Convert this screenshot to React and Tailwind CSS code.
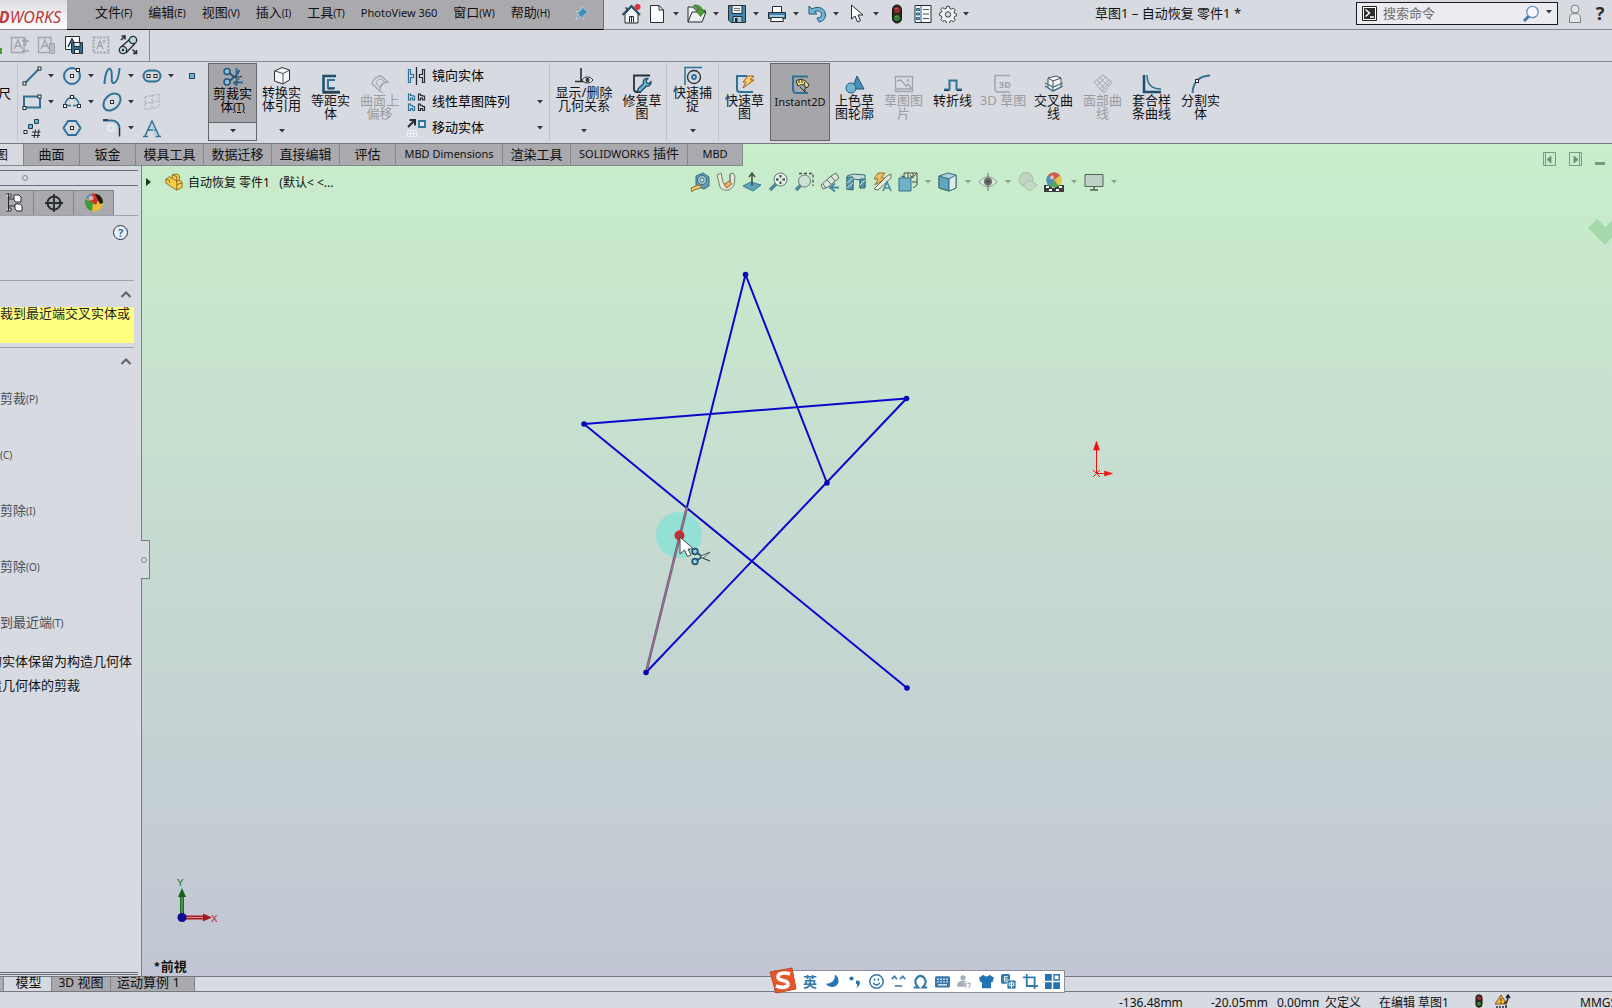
import React from 'react';

const B = '#2f7297';
const D = '#262c32';
const L = '#6fb4d3';
const G = '#a3a5aa';

const Svg = ({ size = 20, children, className = '' }) => (
  <svg width={size} height={size} viewBox="0 0 20 20" fill="none" className={`shrink-0 ${className}`} aria-hidden="true">
    {children}
  </svg>
);

const Caret = ({ color = '#33363b' }) => (
  <svg width="6" height="4" viewBox="0 0 6 4" className="shrink-0" aria-hidden="true">
    <path d="M0 0h6L3 3.6z" fill={color} />
  </svg>
);

// small square handle used on sketch entity icons
const Node = ({ x, y }) => <rect x={x - 1.5} y={y - 1.5} width="3" height="3" fill="#fff" stroke={D} />;

const ICONS = {
  // title bar
  home: (
    <Svg>
      <path d="M4 10v9h13v-9l-6.500-7z" fill="#f4f5f7" stroke={D} />
      <path d="M1.500 11 10.500 2 19 11" stroke="#24566f" strokeWidth="2.200" />
      <path d="M4 4h2v4" stroke={D} />
      <path d="M8.500 18.500v-6h4v6M10.500 12.500v6" stroke={D} />
      <circle cx="16.500" cy="3" r="3" fill="#e23440" />
    </Svg>
  ),
  doc: (
    <Svg>
      <path d="M3.500 1.500h8.500l4.500 4.500v12.500h-13z" fill="#fafbfc" stroke={D} strokeLinejoin="round" />
      <path d="M12 1.500v4.500h4.500" stroke={D} />
    </Svg>
  ),
  open: (
    <Svg>
      <path d="M1 18V3h5l1.500 2H15v3h4l-4 10z" fill="#edf0f1" stroke={D} />
      <path d="M1 18l4-10h14" stroke={D} />
      <path d="M7 1c5 0 8 2 8 5h3.500l-5 6.500-5-6.500h3.500c0-2-2-3-5-3z" fill="#4ca32c" stroke="#24601a" strokeWidth=".7" />
    </Svg>
  ),
  save: (
    <Svg>
      <path d="M1.500 1.500h17v17H4l-2.500-2.500z" fill="#4289af" stroke={D} />
      <path d="M5 1.500h10v8H5z" fill="#f0f3f5" stroke={D} />
      <path d="M7 4.500h6M7 6.500h6" stroke="#777" />
      <path d="M6 12.500h9v6H6z" fill="#a8cbdc" stroke={D} />
      <path d="M8 14h2.500v4H8z" fill={D} />
    </Svg>
  ),
  print: (
    <Svg>
      <path d="M5.500 8V2.500h9V8" fill="#fff" stroke={D} />
      <path d="M1.500 8.500h17v6h-17z" fill="#3f83aa" stroke={D} />
      <path d="M3 12h14" stroke="#bfe0ef" strokeWidth="1.500" />
      <path d="M4.500 13.500h11l1 4h-13z" fill="#fff" stroke={D} />
    </Svg>
  ),
  undo: (
    <Svg>
      <path d="M2 2v8h8L7.500 7.500c4-1.500 7 .5 7 3 0 2-1.500 3.500-4.500 3.500l2 4c4-.5 6.500-3.500 6.500-7C18.500 5 12 1 5 5z" fill={L} stroke="#1f5879" strokeLinejoin="round" />
    </Svg>
  ),
  cursor: (
    <Svg>
      <path d="M4.500 1v14l3.500-3 2.500 6 3-1.300-2.500-5.700H16z" fill="#fff" stroke={D} strokeLinejoin="round" />
    </Svg>
  ),
  traffic: (
    <Svg>
      <rect x="5.500" y="1" width="9" height="18" rx="4.500" fill="#2c2520" stroke="#181411" />
      <circle cx="10" cy="6" r="3" fill="#9e2b25" />
      <circle cx="10" cy="14" r="3" fill="#2f8432" />
      <path d="M8.500 5l1-1M8.500 13l1-1" stroke="#eba99b" />
    </Svg>
  ),
  list: (
    <Svg>
      <path d="M2 1.500h16v17H2z" fill="#f6f8f9" stroke={D} />
      <path d="M8 2v16M3.500 4.500h3v2h-3zM3.500 9h3v2h-3zM3.500 13.500h3v2h-3z" fill={L} stroke="#275f80" />
      <path d="M10 5.500h6M10 10h6M10 14.500h6" stroke="#555" />
    </Svg>
  ),
  gear: (
    <Svg size={18}>
      <path
        d="M8.500 1.500h3l.6 2.500 1.700.7 2.200-1.300 2 2-1.300 2.200.7 1.700 2.100.7v2l-2.100.7-.7 1.700 1.300 2.200-2 2-2.200-1.300-1.700.7-.6 2.500h-3l-.6-2.500-1.700-.7L4 18.100l-2-2 1.300-2.200-.7-1.700L.5 11.500v-2.500l2.100-.7.7-1.700L2 4.900l2-2 2.200 1.300L7.900 4z"
        fill="#eff1f3"
        stroke="#3b4046"
        strokeWidth="1.100"
      />
      <circle cx="10" cy="10.500" r="3" fill="#d7dae0" stroke="#3b4046" strokeWidth="1.100" />
    </Svg>
  ),
  pin: (
    <Svg size={16}>
      <path d="M10 2l8 8-3 .5-3 3 .5 4L8 14l-6 4.500L6.500 12 2 8l4.500.5 3-3z" fill="#3f8cbb" stroke="#d7ebf5" strokeWidth=".8" />
    </Svg>
  ),
  // annotation toolbar
  noteAdd: (
    <Svg>
      <path d="M1.500 2.500H14v15H1.500zM4 14l4-9 4 9M5.500 11h5M12 6h7M15.500 3v8M12 16h7" stroke={G} strokeWidth="1.400" />
    </Svg>
  ),
  noteDel: (
    <Svg>
      <path d="M1.500 2.500H14v15H1.500zM4 14l4-9 4 9M5.500 11h5" stroke={G} strokeWidth="1.400" />
      <path d="M12.500 8.500h5v10h-5z" fill="#b9bbc0" stroke={G} />
    </Svg>
  ),
  noteSave: (
    <Svg>
      <path d="M1.500 1.500h14v13h-14z" fill="#f7f8f9" stroke={D} />
      <path d="M4 12l4-8 3 6" stroke={D} strokeWidth="1.500" />
      <path d="M7.500 7.500h11v11h-10l-1-1z" fill="#2f6f95" stroke={D} />
      <path d="M10 7.500h6v4h-6zM10.500 14.500h5v4h-5z" fill="#dfe9ee" stroke={D} />
    </Svg>
  ),
  noteSel: (
    <Svg>
      <rect x="2.500" y="2.500" width="15" height="15" stroke={G} strokeWidth="2" strokeDasharray="2 1.300" />
      <path d="M6 14l3-8 3 8M7 11h4" stroke={G} strokeWidth="1.400" />
      <circle cx="13" cy="6.500" r="1.300" stroke={G} />
    </Svg>
  ),
  link: (
    <Svg>
      <path d="M2.500 12.500l9-8M8 18l9-9.500" stroke={D} strokeWidth="1.300" />
      <circle cx="5" cy="15" r="3.700" fill="#b7d6e4" stroke={D} strokeWidth="1.300" />
      <circle cx="15" cy="5" r="3.700" fill="#b7d6e4" stroke={D} strokeWidth="1.300" />
      <circle cx="5" cy="15" r="1.200" fill={D} />
      <path d="M3 5l4-4M3.500 1H7v3.500M14.500 14.500l4 4M18.500 15v3.500H15" stroke={D} strokeWidth="1.500" />
    </Svg>
  ),
  // sketch entities
  line: (<Svg><path d="M2 18L18 2" stroke={B} strokeWidth="2" /><Node x={2.5} y={17.5} /><Node x={17.5} y={2.5} /></Svg>),
  rect: (<Svg><path d="M2 4.500h16v11H2z" stroke={B} strokeWidth="2" /><Node x={2.5} y={16} /><Node x={17.5} y={4.5} /></Svg>),
  pattern: (
    <Svg>
      <Node x={3.5} y={14} />
      <path d="M6.500 6.500h4v4h-4zM12.500 1.500h4v4h-4z" fill={L} stroke="#1d4157" />
      <path d="M10 14h8.500M9.500 17.500H18M13.500 11.500L12 20M17 11.500L15.500 20" stroke={D} strokeWidth="1.100" />
    </Svg>
  ),
  circle: (<Svg><circle cx="10" cy="10" r="8" stroke={B} strokeWidth="2" /><Node x={10} y={10} /><Node x={16} y={4} /></Svg>),
  arc: (<Svg><path d="M3 14C3 2.500 17 2.500 17 14" stroke={B} strokeWidth="1.600" /><path d="M5 13.500h4M11 13.500h4" stroke={B} strokeWidth="1.300" /><Node x={3} y={14} /><Node x={17} y={14} /><Node x={10} y={5} /></Svg>),
  polygon: (<Svg><path d="M6 3h8l4.500 7L14 17H6l-4.500-7z" stroke={B} strokeWidth="2" strokeLinejoin="round" /><Node x={10} y={10} /></Svg>),
  spline: (<Svg><path d="M2.500 18C3 6 7 0 9 4s-1 14 3 13S17 9 17.500 2" stroke={B} strokeWidth="2" /></Svg>),
  ellipse: (<Svg><ellipse cx="10" cy="10" rx="9.800" ry="7" transform="rotate(-45 10 10)" stroke={B} strokeWidth="2" /><Node x={10} y={10} /></Svg>),
  fillet: (<Svg><path d="M1 2.500h9c5 0 7.500 4 7.500 8" stroke={B} strokeWidth="2" /><path d="M17.500 10v8.500M1 2h5" stroke={D} strokeWidth="1.500" /><circle cx="9" cy="10" r="3" stroke="#eceef1" strokeWidth="1.500" /></Svg>),
  slot: (<Svg><rect x="1.500" y="4.500" width="17" height="11" rx="5.500" stroke={B} strokeWidth="2" /><Node x={6.5} y={10} /><Node x={13.5} y={10} /></Svg>),
  plane: (<Svg><path d="M3 5l14-3v13L3 18zM10 3v14M3 11.500l14-3" stroke={G} strokeDasharray="2 1.500" /></Svg>),
  text: (<Svg><path d="M3 18l7-15 7 15M6 12h8M1 18.500h5M13.500 18.500H19" stroke={B} strokeWidth="1.500" /><path d="M9 6l5.500 12" stroke="#9cc9de" strokeWidth="1.500" /></Svg>),
  point: (<Svg><path d="M7.500 7.500h5v5h-5z" fill={L} stroke="#1d4157" /></Svg>),
  // ribbon
  trim: (
    <Svg>
      <circle cx="4" cy="4.500" r="3" fill="#8fc2da" stroke="#1f5879" strokeWidth="1.500" />
      <circle cx="4" cy="15" r="3" fill="#8fc2da" stroke="#1f5879" strokeWidth="1.500" />
      <path d="M6.500 6l5 4.500M6.500 14l7-6 3-5" stroke="#1f5879" strokeWidth="1.800" />
      <path d="M13.500 1v18M10 15.500h10" stroke="#2c6c92" strokeWidth="1.800" />
      <path d="M11.500 10.500l7.500-1M11.500 18l7-10" stroke={D} strokeDasharray="2 1" />
    </Svg>
  ),
  convert: (
    <Svg>
      <path d="M2.500 5l7.500-3.500L17.500 4v10L11 18l-8.500-3z" fill="#f4f6f7" stroke={D} strokeLinejoin="round" />
      <path d="M3 5l8 2.500V17.500M11 7.500L17 4.500" stroke="#4a5258" />
    </Svg>
  ),
  offset: (
    <Svg>
      <path d="M15 2H2.500v16H19" stroke="#1d4f6f" strokeWidth="2.500" />
      <path d="M14 6H7v8h7" stroke={B} strokeWidth="2" />
      <path d="M7 15h6M2 19h17" stroke={D} />
    </Svg>
  ),
  surfOffset: (
    <Svg>
      <path d="M2 10c1-6 6-8 9-8l7 6c-5 0-8 4-8 9z" stroke={G} strokeWidth="1.300" />
      <path d="M6 9c1-3 3-4 5-4l4 3c-3 1-5 3-5 6zM10 17l3 2" stroke={G} />
    </Svg>
  ),
  mirror: (
    <Svg>
      <path d="M10.500 1v18" stroke={D} strokeWidth="1.300" />
      <path d="M2.500 3.500v13h2v-5h3v-3h-3v-5z" stroke={B} strokeWidth="1.200" />
      <path d="M18.500 3.500v13h-2v-5h-3v-3h3v-5z" stroke={D} strokeWidth="1.200" />
    </Svg>
  ),
  array: (
    <Svg>
      <path d="M2.500 2v6h2V6h2v2h2V4h-2v-.5h-2V2zM2.500 12v6.500h2v-2h2v2h2v-4h-2v-1h-2V12z" stroke={B} strokeWidth="1.200" />
      <path d="M12.500 2v6h2V6h2v2h2V4h-2v-.5h-2V2zM12.500 12v6.500h2v-2h2v2h2v-4h-2v-1h-2V12z" stroke={D} strokeWidth="1.200" />
    </Svg>
  ),
  move: (
    <Svg>
      <path d="M2 9l6-6M3.500 2H9v5.500" stroke={D} strokeWidth="2" />
      <path d="M13 3h6v6h-6z" fill="#e7edf0" stroke={B} strokeWidth="1.800" />
      <path d="M1.500 12.500h9v6h-9zM4.500 12v7M7.500 12v7M1 15.500h10" stroke="#f0f1f3" />
    </Svg>
  ),
  relations: (
    <Svg>
      <path d="M7 2v13M1 15.500h10" stroke={D} strokeWidth="1.600" />
      <path d="M8 14c3-4 8-4 11 0-3 4-8 4-11 0z" fill="#f3f5f6" stroke={D} />
      <circle cx="13.500" cy="14" r="2.200" fill="#35404a" />
    </Svg>
  ),
  repair: (
    <Svg>
      <path d="M18 1.500H2V15c0 2 1 3 3 3h4" stroke="#24323c" strokeWidth="1.800" />
      <path d="M6 15l5.500-5.500c-1-3 1-5.500 4.500-5L14 7l1 2 2 .500 2-2c.5 3.500-2 5-4.500 4.500L9 17.500c-2 1.500-4.500-.5-3-2.500z" fill={L} stroke="#174967" strokeWidth="1.200" />
    </Svg>
  ),
  snap: (
    <Svg>
      <path d="M19 1.500H2V19" stroke={B} strokeWidth="1.500" />
      <circle cx="11" cy="11" r="6.500" stroke={D} strokeWidth="1.300" />
      <circle cx="11" cy="11" r="2" stroke={B} strokeWidth="1.800" />
    </Svg>
  ),
  rapid: (
    <Svg>
      <path d="M12 2H2v13c0 2 1 3 3 3h13" stroke={B} strokeWidth="2" />
      <path d="M13 2h6l-4 4h4L8 14l3-6H8z" fill="#ffd36b" stroke="#a5571b" />
    </Svg>
  ),
  instant: (
    <Svg>
      <path d="M18 1.500H3V14c0 2 1 4 3 4h12" stroke={B} strokeWidth="2" />
      <path d="M6 6c4-3 9-2 13 4l-2 3c-3-4-5-4-9-2z" fill="#f0d980" stroke={D} />
      <path d="M9 5v3M12 5v3M15 7l-1 3M10 12l5 5v-5" stroke={D} />
    </Svg>
  ),
  shaded: (
    <Svg>
      <path d="M12 2l7 13H7z" fill="#4791b7" stroke="#1f5879" />
      <circle cx="6" cy="14" r="5" fill="#74b6d4" stroke="#1f5879" />
    </Svg>
  ),
  picture: (
    <Svg>
      <path d="M1.500 2.500h17v15h-17zM3 7l4-1 5 6 2-2 4 5M2 15h16" stroke={G} strokeWidth="1.300" />
      <circle cx="14" cy="6.500" r="1" stroke={G} />
    </Svg>
  ),
  jog: (<Svg><path d="M1 15.500h5.500v-9h7v9H19" stroke={B} strokeWidth="2" /><path d="M1 16.500h5M14 16.500h5" stroke={D} /></Svg>),
  sketch3d: (
    <Svg>
      <path d="M17 1.500H2V15c0 2 1 3 3 3h12" stroke={G} strokeWidth="1.500" />
      <text x="6" y="14" fontSize="9" fontWeight="700" fontFamily="Noto Sans, sans-serif" fill={G}>3D</text>
    </Svg>
  ),
  intersect: (
    <Svg>
      <path d="M4 4l8-2 5 2v9l-8 4-5-3z" fill="#f4f5f6" stroke="#454c52" />
      <path d="M4 4l5 3 8-3M9 7v10" stroke="#454c52" />
      <path d="M1 9l8 4 10-4M1 12l8 5 10-5" stroke="#3f6f88" strokeWidth="1.200" />
    </Svg>
  ),
  face: (
    <Svg>
      <path d="M1 8l9-7 9 7-8 11zM4 6l8 9M7 4l8 8M4 11l9-8M7 15l9-9M9 17l8-9" stroke={G} />
    </Svg>
  ),
  fit: (<Svg><path d="M2 1v17h17" stroke="#1d4f6f" strokeWidth="2.500" /><path d="M5 1c0 9 4 14 14 14" stroke={B} strokeWidth="1.500" /></Svg>),
  split: (<Svg><path d="M1.500 19C2 8 8 2 19 1.500" stroke={B} strokeWidth="1.800" /><Node x={6} y={7} /></Svg>),
  // heads-up view toolbar
  tape: (
    <Svg>
      <path d="M6 4l7-3 6 4v9l-5 3-8-3z" fill="#4b92b5" stroke="#28546b" />
      <circle cx="12" cy="8" r="4.500" fill="#9ac8da" stroke="#28546b" />
      <circle cx="12" cy="8" r="2" fill="#e0eee9" stroke="#28546b" />
      <path d="M1 16l7-3 4 1-2 2-6 2-2 2z" fill="#f5c35c" stroke="#7c5a1a" />
    </Svg>
  ),
  clip: (
    <Svg>
      <path d="M1 3l4-2 2 9c2 4 5 4 7 0V2l3-1 2 3-1 9c-3 6-10 7-14 2z" fill="#e8e8dc" stroke="#6c6a58" />
      <path d="M14 2v8c-2 3-5 3-6 1" stroke="#6c6a58" />
      <path d="M8 13l5-4 3 3-5 4z" fill="#eda84d" stroke="#8a5720" />
    </Svg>
  ),
  normal: (
    <Svg>
      <path d="M1 14l8-4 10 3-8 6z" fill="#4c9abb" stroke="#24607c" />
      <path d="M10 14V2M7 5l3-4 3 4" stroke="#333" strokeWidth="1.500" />
    </Svg>
  ),
  zoomFit: (
    <Svg>
      <path d="M2 18l6-6" stroke="#39799a" strokeWidth="3.500" />
      <circle cx="12.500" cy="7.500" r="6.500" fill="#e2efe8" stroke="#596b68" />
      <path d="M12.500 3v2.500M12.500 9.500V12M8 7.500h2.500M14.500 7.500H17" stroke="#222" strokeWidth="1.800" />
    </Svg>
  ),
  zoomArea: (
    <Svg>
      <path d="M5 1.500h14V14" stroke="#333" strokeDasharray="3 2" strokeWidth="1.300" />
      <path d="M2 18l5-5" stroke="#39799a" strokeWidth="3.500" />
      <circle cx="10.500" cy="9" r="6" fill="#cfdfd6" stroke="#596b68" />
    </Svg>
  ),
  prevView: (
    <Svg>
      <path d="M1 13l10-9 5-3 3 5-11 9-5 2z" fill="#dee5df" stroke="#4f5c58" />
      <path d="M11 4l4 5M7 8l4 4M3 12l3 4" stroke="#4f5c58" />
      <path d="M19 15.500h-8m4-4l-5 4 5 4" stroke="#2f7ba1" strokeWidth="2" />
    </Svg>
  ),
  section: (
    <Svg>
      <path d="M1 4l6-2 12 1v12l-5 1V8L7 7v11l-6-1z" fill="#c6d9dc" stroke="#24556d" />
      <path d="M1 5h6v12.500H1zM14 7h5v9h-5z" fill="#3f88ac" stroke="#24556d" />
      <path d="M1 11l6-5M1 16l6-5M14 13l5-5" stroke="#d9edf3" />
    </Svg>
  ),
  dynView: (
    <Svg>
      <path d="M6 1h7L9 6h5L3 13l3-6H2z" fill="#f6b64c" stroke="#8c5b20" />
      <path d="M2 17L15 4l4-2v4L6 18z" fill="#ece9dc" stroke="#5d5b50" />
      <path d="M11 19l4-9 4 9M12.500 16h5" stroke="#2f7ba1" strokeWidth="1.600" />
    </Svg>
  ),
  orient: (
    <Svg>
      <path d="M6 6V1h13v12l-4 3M10 1v5M15 1v5M14 10h5M14 6l5-5" stroke="#333" />
      <path d="M1 6h12v13H1z" fill="#61a9c8" stroke="#1f5b79" />
      <path d="M3 4l4 1M12 5h2l-2-2" stroke="#333" />
    </Svg>
  ),
  cube: (
    <Svg>
      <path d="M1 4l9-3 8 2v13l-7 3-10-3z" fill="#a7cddd" stroke="#24556d" />
      <path d="M1 4l10 3v12L1 16z" fill="#4f9abc" stroke="#24556d" />
      <path d="M11 7l7-4v13l-7 3z" fill="#e0eef1" stroke="#24556d" />
    </Svg>
  ),
  eye: (
    <Svg>
      <path d="M1 10c5-7 13-7 18 0-5 6-13 6-18 0z" fill="#dfe5e1" stroke="#8b938e" />
      <circle cx="10" cy="9.500" r="4" fill="#525a58" />
      <circle cx="10" cy="9.500" r="1.500" fill="#111" />
      <path d="M10 1v18" stroke="#555" />
    </Svg>
  ),
  appearance: (
    <Svg>
      <circle cx="8" cy="7.500" r="7" fill="#bdd1be" stroke="#a3b7a5" />
      <path d="M5 13l6-5 8 5-7 6z" fill="#c5d7c6" stroke="#a3b7a5" />
    </Svg>
  ),
  scene: (
    <Svg>
      <path d="M0 13h20v7H0z" fill="#222" />
      <path d="M2 14h3v2H2zM8 14h3v2H8zM15 14h3v2h-3zM5 17h3v2H5zM12 17h3v2h-3z" fill="#fff" />
      <circle cx="10" cy="8" r="7.500" fill="#3f9a4b" />
      <path d="M10 8L4 3.500A7.500 7.500 0 0 1 16 3.500z" fill="#d4433b" />
      <path d="M10 8l6-4.500A7.500 7.500 0 0 1 15 14z" fill="#e8bc3c" />
      <path d="M10 8L4 3.500A7.500 7.500 0 0 0 5 14z" fill="#3b7fc0" />
      <circle cx="8" cy="5.500" r="2" fill="#fff" opacity=".6" />
    </Svg>
  ),
  monitor: (
    <Svg>
      <path d="M1 2.500h18v12H1z" fill="#bfcdc4" stroke="#414d48" />
      <path d="M10 15v3M6 18h8" stroke="#414d48" strokeWidth="1.500" />
    </Svg>
  ),
  part: (
    <Svg size={18}>
      <path d="M1 7l4-3 3 2V2l5-1 3 2v5l3 2v6l-6 3-8-5-4-3z" fill="#f8cf4b" stroke="#8a6516" />
      <path d="M8 6l5 3 3-1M13 9v4l6-2M13 13v6M8 2l5 2v5M5 11V8L1 7" stroke="#8a6516" />
    </Svg>
  ),
  // property manager tabs
  config: (
    <Svg>
      <path d="M4.500 1v17M2 1h5v3H4M2 18h5v-3H4" fill="#e9eaec" stroke={D} />
      <path d="M5 6h5M5 13h6" stroke={D} />
      <path d="M10 2h5l2 2v5h-5l-2-2zM11 11h5l2 2v5h-5l-2-2z" fill="#fff" stroke={D} />
    </Svg>
  ),
  target: (<Svg><circle cx="10" cy="10" r="6.500" stroke={D} strokeWidth="2" /><path d="M10 1v18M1 10h18" stroke={D} strokeWidth="1.800" /></Svg>),
  ball: (
    <Svg>
      <circle cx="10" cy="9.500" r="9" fill="#e9bd35" />
      <path d="M9 9.500L2 5A9 9 0 0 1 9 .5z" fill="#3c84c4" />
      <path d="M5 8L8 .7c3-.6 6 .3 8 2.300L12 12z" fill="#cf3527" />
      <path d="M11 1c5 0 8 4 8 9l-3 1z" fill="#1d1715" />
      <path d="M9 10L1.500 6A9 9 0 0 0 8 18z" fill="#3a9a44" />
      <circle cx="7" cy="5" r="2.500" fill="#fff" opacity=".55" />
    </Svg>
  ),
};

const QUICK = [
  { id: 'home', label: '主页' },
  { id: 'doc', label: '新建', menu: true },
  { id: 'open', label: '打开', menu: true },
  { id: 'save', label: '保存', menu: true },
  { id: 'print', label: '打印', menu: true },
  { id: 'undo', label: '撤消', menu: true },
  { id: 'cursor', label: '选择', menu: true },
  { id: 'traffic', label: '重建模型' },
  { id: 'list', label: '文件属性' },
  { id: 'gear', label: '选项', menu: true },
];

const MENUS = [
  ['文件', '(F)'], ['编辑', '(E)'], ['视图', '(V)'], ['插入', '(I)'], ['工具', '(T)'],
  ['', 'PhotoView 360'], ['窗口', '(W)'], ['帮助', '(H)'],
];

const ENTITIES = [
  ['line', true], ['circle', true], ['spline', true], ['slot', true], ['point', false],
  ['rect', true], ['arc', true], ['ellipse', true], ['plane', false], null,
  ['pattern', false], ['polygon', false], ['fillet', true], ['text', false], null,
];

const TABS = [
  ['', '曲面', 'w-14'],
  ['', '钣金', 'w-14'],
  ['', '模具工具', 'w-[68px]'],
  ['', '数据迁移', 'w-[68px]'],
  ['', '直接编辑', 'w-[68px]'],
  ['', '评估', 'w-14'],
  ['MBD Dimensions', '', 'w-[107px]'],
  ['', '渲染工具', 'w-[68px]'],
  ['SOLIDWORKS', ' 插件', 'w-[117px]'],
  ['MBD', '', 'w-14'],
];

const VIEW_TOOLS = [
  ['tape'], ['clip'], ['normal'], ['zoomFit'], ['zoomArea'], ['prevView'], ['section'], ['dynView'],
  ['orient', true], ['cube', true], ['eye', true], ['appearance'], ['scene', true], ['monitor', true],
];

const RibbonButton = ({ icon, lines, menu, disabled, width = 'w-[49px]', active }) => (
  <button
    type="button"
    disabled={disabled}
    className={`${width} flex h-[78px] shrink-0 flex-col items-center text-[13px] leading-[13px] whitespace-nowrap ${menu ? 'pt-[3px]' : 'pt-[11px]'} ${disabled ? 'text-[#9a9ca1]' : 'text-[#101216]'} ${active ? 'border border-[#65666b] bg-[#a6a5aa]' : ''}`}
  >
    {ICONS[icon]}
    {lines.map((l) => (
      <span key={l} className={l === 'Instant2D' ? 'text-[11px]' : ''}>{l}</span>
    ))}
    {menu && <span className="mt-auto pb-2"><Caret /></span>}
  </button>
);

const Divider = () => <div className="h-[78px] w-px shrink-0 bg-[#c0c3c9]" />;

const TitleBar = () => (
  <header className="flex h-[30px] shrink-0 items-stretch border-b border-[#85888d]">
    <div className="flex w-[67px] shrink-0 items-center justify-end overflow-hidden bg-gradient-to-b from-[#dcdde0] to-white pt-1 pr-1.5 text-[16px] text-[#b93c3f] italic">
      <b>SOLID</b>WORKS
    </div>
    <nav className="-mb-px flex w-[537px] shrink-0 items-center gap-4 border-r border-b border-r-[#707176] border-b-black bg-[#a9a9ae] pb-1 pl-7 text-[13px] whitespace-nowrap text-[#111]">
      {MENUS.map(([name, key]) => (
        <button key={name + key} type="button">
          {name}<span className={name ? 'text-[10px]' : 'text-[11px]'}>{key}</span>
        </button>
      ))}
      <button type="button" aria-label="固定菜单" className="ml-2">{ICONS.pin}</button>
    </nav>
    <div className="flex items-center pb-0.5 pl-[15px]">
      {QUICK.map(({ id, label, menu }) => (
        <button key={id} type="button" aria-label={label} className={`flex items-center pl-0.5 ${menu ? 'w-10 gap-1.5' : 'w-[26px]'}`}>
          {ICONS[id]}
          {menu && <Caret />}
        </button>
      ))}
    </div>
    <h1 className="ml-[118px] flex items-center pb-0.5 text-[13px] whitespace-nowrap text-[#111]">草图1 – 自动恢复 零件1 *</h1>
    <div className="ml-auto flex shrink-0 items-center gap-2.5 pr-1 pb-0.5">
      <label className="flex h-[23px] w-[202px] items-center border border-[#1a1b1e] bg-[#ececf0] px-[5px]">
        <svg width="15" height="15" viewBox="0 0 15 15" aria-hidden="true">
          <path d="M.5.5h14v14H.5z" fill="#fff" stroke="#222" />
          <path d="M2 2h11v11H2z" fill="#2d2d30" />
          <path d="M3.500 3.500l4 3.500-4 3.500M8 11h4" fill="none" stroke="#fff" strokeWidth="1.500" />
        </svg>
        <input type="text" aria-label="搜索命令" placeholder="搜索命令" className="ml-1.5 min-w-0 flex-1 bg-transparent text-[13px] outline-none placeholder:text-[#6c6d72]" />
        <svg width="18" height="18" viewBox="0 0 18 18" fill="none" aria-hidden="true">
          <path d="M2 16l5-5" stroke="#3c77a8" strokeWidth="3" />
          <circle cx="10.500" cy="7" r="5.700" fill="#f4f8fc" stroke="#6891b8" strokeWidth="1.300" />
        </svg>
        <span className="ml-1.5 pb-1"><Caret /></span>
      </label>
      <button type="button" aria-label="登录">
        <svg width="14" height="20" viewBox="0 0 14 20" fill="#e4e5e8" stroke="#7d7f84" aria-hidden="true">
          <circle cx="7" cy="5" r="4" />
          <path d="M1.500 18.500v-5c0-3 2-4 5.500-4s5.500 1 5.500 4v5z" />
        </svg>
      </button>
      <button type="button" className="w-4 text-[18px] font-bold text-[#2b2d31]">?</button>
    </div>
  </header>
);

const AnnotationBar = () => (
  <div className="flex h-8 shrink-0 border-b border-[#85888d]">
    <div className="flex w-[150px] items-center border-r border-[#85888d] pb-0.5">
      <div className="mt-3 mr-2 h-1.5 w-0.5 bg-[#4a9a2c]" />
      {['noteAdd', 'noteDel', 'noteSave', 'noteSel', 'link'].map((id) => (
        <button key={id} type="button" aria-label={id} className="w-[27px] shrink-0">{ICONS[id]}</button>
      ))}
    </div>
  </div>
);

const Ribbon = () => (
  <div className="flex h-[82px] shrink-0 items-start overflow-hidden border-b border-[#75787d] pt-px">
    <div className="flex h-[78px] w-[17px] shrink-0 items-center pb-4 text-[13px] whitespace-nowrap">
      <span className="-ml-0.5">尺</span>
    </div>
    <Divider />
    <div className="grid w-[190px] shrink-0 grid-cols-[40px_40px_40px_40px_30px] grid-rows-3 pl-1">
      {ENTITIES.map((e, i) =>
        e ? (
          <button key={e[0]} type="button" aria-label={e[0]} className="flex h-[26px] items-center gap-1.5">
            {ICONS[e[0]]}
            {e[1] && <Caret />}
          </button>
        ) : (
          <span key={i} />
        )
      )}
    </div>
    <div className="flex h-[78px] w-[49px] shrink-0 flex-col border border-[#65666b]">
      <button type="button" className="flex h-[58px] flex-col items-center bg-[#a6a5aa] pt-[3px] text-[13px] leading-[13px]">
        {ICONS.trim}
        <span>剪裁实</span>
        <span>体<span className="text-[10px] underline">(T)</span></span>
      </button>
      <button type="button" aria-label="剪裁选项" className="flex flex-1 items-center justify-center border-t border-[#65666b] pb-0.5"><Caret /></button>
    </div>
    <RibbonButton icon="convert" lines={['转换实', '体引用']} menu />
    <RibbonButton icon="offset" lines={['等距实', '体']} />
    <RibbonButton icon="surfOffset" lines={['曲面上', '偏移']} disabled />
    <div className="w-[145px] shrink-0 pr-1.5 pl-0.5 text-[13px]">
      {[['mirror', '镜向实体'], ['array', '线性草图阵列', true], ['move', '移动实体', true]].map(([id, name, menu]) => (
        <button key={id} type="button" className="flex h-[26px] w-full items-center gap-1.5">
          {ICONS[id]}
          <span className="flex-1 text-left">{name}</span>
          {menu && <Caret />}
        </button>
      ))}
    </div>
    <Divider />
    <RibbonButton icon="relations" lines={['显示/删除', '几何关系']} menu width="w-[68px]" />
    <RibbonButton icon="repair" lines={['修复草', '图']} width="w-12" />
    <Divider />
    <RibbonButton icon="snap" lines={['快速捕', '捉']} menu width="w-[51px]" />
    <Divider />
    <RibbonButton icon="rapid" lines={['快速草', '图']} width="w-[51px]" />
    <RibbonButton icon="instant" lines={['Instant2D']} width="w-[60px]" active />
    <RibbonButton icon="shaded" lines={['上色草', '图轮廓']} />
    <RibbonButton icon="picture" lines={['草图图', '片']} disabled />
    <RibbonButton icon="jog" lines={['转折线']} />
    <RibbonButton icon="sketch3d" lines={['3D 草图']} disabled width="w-[52px]" />
    <RibbonButton icon="intersect" lines={['交叉曲', '线']} />
    <RibbonButton icon="face" lines={['面部曲', '线']} disabled />
    <RibbonButton icon="fit" lines={['套合样', '条曲线']} />
    <RibbonButton icon="split" lines={['分割实', '体']} />
  </div>
);

const CommandTabs = () => (
  <div className="flex h-[22px] shrink-0 items-stretch">
    <div className="flex border-b border-[#85888d] text-[13px] leading-[18px] whitespace-nowrap text-[#111]">
      <button type="button" className="w-[23px] overflow-hidden bg-[#d7dae0] pb-0.5 text-left"><span className="-ml-[5px]">图</span></button>
      {TABS.map(([latin, cjk, width]) => (
        <button key={latin + cjk} type="button" className={`${width} border-l border-[#85868b] bg-[#a9a9ae] pb-0.5 last:border-r`}>
          {latin && <span className="text-[11px]">{latin}</span>}{cjk}
        </button>
      ))}
    </div>
    <div className="ml-auto flex items-center gap-[13px] pt-2 pr-[7px]">
      {['M8 4v7L4 7.500z', 'M5 4v7l4-3.500z'].map((d, i) => (
        <button key={d} type="button" aria-label={i ? '下一窗口' : '上一窗口'}>
          <svg width="13" height="15" viewBox="0 0 13 15" fill="none" stroke="#7e9683" aria-hidden="true">
            <path d={i ? 'M.5.5h12v13H.5zM10.500 1v13' : 'M.5.5h12v13H.5zM2.500 1v13'} />
            <path d={d} fill="#6d8572" />
          </svg>
        </button>
      ))}
      <button type="button" aria-label="最小化" className="mt-2 h-[3px] w-[10px] bg-[#7e9683]" />
    </div>
  </div>
);

const Chevron = () => (
  <svg width="12" height="8" viewBox="0 0 12 8" fill="none" className="mr-0.5 ml-auto block" aria-hidden="true">
    <path d="M1.500 7L6 2.500 10.500 7" stroke="#5e6066" strokeWidth="2" />
  </svg>
);

const OPTIONS = [['剪裁', '(P)'], ['', '(C)'], ['剪除', '(I)'], ['剪除', '(O)'], ['到最近端', '(T)']];

const PropertyPanel = () => (
  <aside className="relative z-10 flex w-[142px] shrink-0 flex-col border-r border-[#7b7e83] bg-[#d7dae0] pt-1 text-[13px] whitespace-nowrap text-[#111]">
    <div className="mr-[3px] flex h-4 items-center border-y border-[#666c7d] pl-[22px]">
      <div className="h-1.5 w-1.5 rounded-full border border-[#85888d]" />
    </div>
    <div className="mt-1 mr-[3px] flex h-[26px] border-b border-[#9fa2aa]">
      <button type="button" aria-label="配置" className="w-[34px] border-t border-r border-[#85868b] bg-[#a9a9ae] pl-1">{ICONS.config}</button>
      <button type="button" aria-label="尺寸" className="flex w-10 items-center justify-center border-t border-r border-[#85868b] bg-[#a9a9ae]">{ICONS.target}</button>
      <button type="button" aria-label="外观" className="flex w-10 items-center justify-center border-t border-r border-[#85868b] bg-[#a9a9ae]">{ICONS.ball}</button>
    </div>
    <div className="mr-[7px] h-[65px] border-b border-[#9fa2aa] pt-[9px]">
      <button type="button" className="mr-1.5 ml-auto flex h-[15px] w-[15px] items-center justify-center rounded-full border border-[#26303a] bg-[#eaf2f6] text-[11px] leading-none font-bold text-[#2c6c92]">?</button>
    </div>
    <div className="mr-[7px] h-[67px] border-b border-[#9fa2aa] pt-[9px]">
      <Chevron />
      <p className="mt-[9px] h-9 overflow-hidden bg-[#ffff80] leading-[13px] text-[#222]">裁到最近端交叉实体或</p>
    </div>
    <div className="mr-[7px] pt-[9px]"><Chevron /></div>
    <div className="mt-1.5 flex flex-col">
      {OPTIONS.map(([name, key]) => (
        <button key={name + key} type="button" className="flex h-14 items-center text-[#4a4c52]">
          {name}<span className="text-[10px]">{key}</span>
        </button>
      ))}
    </div>
    <div className="-mt-0.5 -ml-[11px] leading-6">
      <p>的实体保留为构造几何体</p>
      <p>造几何体的剪裁</p>
    </div>
    <div className="mt-auto mr-[3px] mb-px h-[3px] border-y border-[#666c7d]" />
    <div className="absolute top-[374px] -right-[9px] flex h-[39px] w-[9px] items-center border border-l-0 border-[#7b7e83] bg-[#d7dae0]">
      <div className="h-1.5 w-1.5 rounded-full border border-[#85888d]" />
    </div>
  </aside>
);

const Sketch = () => (
  <svg className="absolute inset-0 h-full w-full" viewBox="142 166 1470 810" fill="none" role="img" aria-label="草图1">
    <path d="M1588 228l9-9 8.500 8 12-12 8 8-20.500 22z" fill="#a6d9aa" />
    <circle cx="679" cy="535" r="23" fill="#93e0d5" />
    <path d="M745.500 274.500L827 483M906.500 398.500L584 424M584 424L907 688M906.500 398.500L646 672.500M745.500 274.500L687 507" stroke="#0909ce" strokeWidth="2" />
    <path d="M687 507L646 672.500" stroke="#67607c" strokeWidth="2.600" />
    <path d="M687 507L646 672.500" stroke="#b06c90" strokeWidth="1" />
    {[[745.5, 274.5], [906.5, 398.5], [584, 424], [827, 483], [907, 688], [646, 672.5]].map(([x, y]) => (
      <circle key={x} cx={x} cy={y} r="2.800" fill="#0909b8" />
    ))}
    {/* origin */}
    <g stroke="#ee1111">
      <path d="M1096.500 473.500V446M1096.500 473.500H1110M1093 470l7 7M1100 470l-7 7" />
      <path d="M1096.500 441l3 9h-6zM1112.500 473.500l-8-2.500v5z" fill="#ee1111" strokeWidth=".5" />
    </g>
    {/* trim cursor */}
    <circle cx="679.500" cy="535.500" r="3.700" fill="#93484f" stroke="#dd1f26" strokeWidth="2.500" />
    <path d="M680 537v17l4.500-4 3 6.500 3.500-1.500-3-6h5.500z" fill="#fff" stroke="#444" strokeLinejoin="round" />
    <g stroke="#1c5670" strokeWidth="1.700">
      <circle cx="695" cy="551.500" r="2.800" fill="#9bd0df" />
      <circle cx="695" cy="561.500" r="2.800" fill="#9bd0df" />
      <path d="M697.500 553l5 4M697.500 560l5-3.500" />
      <path d="M701 556l9-4-7 6 7 3-9-3.500z" fill="#e9eeee" stroke="#3c4d50" strokeWidth=".9" />
    </g>
    {/* view triad */}
    <path d="M182 915v-19" stroke="#1d6b24" strokeWidth="4" />
    <path d="M182 915v-18" stroke="#74b878" />
    <path d="M182 888l4 9h-8z" fill="#14601b" />
    <path d="M184 917.500h21" stroke="#a51d22" strokeWidth="4" />
    <path d="M184 917.500h20" stroke="#e88a8c" />
    <path d="M212 917.500l-9-4v8z" fill="#a01a20" />
    <circle cx="182" cy="917.500" r="4.500" fill="#0b0b93" />
    <text x="177" y="886" fontSize="11" fontFamily="Liberation Mono, monospace" fill="#21752a">Y</text>
    <text x="211" y="922" fontSize="11" fontFamily="Liberation Mono, monospace" fill="#c2262c">X</text>
    <text x="153" y="971" fontSize="13" fontWeight="700" fontFamily="Liberation Mono, Noto Sans CJK SC, monospace" fill="#111">*前視</text>
  </svg>
);

const Viewport = () => (
  <main className="relative min-w-0 flex-1 overflow-hidden">
    <Sketch />
    <div className="relative flex items-center pt-[5px]">
      <button type="button" className="flex w-[546px] shrink-0 items-center pl-1 text-[12px] whitespace-pre text-[#111]">
        <svg width="5" height="8" viewBox="0 0 5 8" aria-hidden="true"><path d="M0 0l5 4-5 4z" fill="#123b18" /></svg>
        <span className="mr-[5px] ml-3.5">{ICONS.part}</span>
        <span className="pt-[3px]">自动恢复 零件1   (默认&lt; &lt;...</span>
      </button>
      <div className="flex opacity-85">
        {VIEW_TOOLS.map(([id, menu]) => (
          <button key={id} type="button" aria-label={id} className={`flex h-5 shrink-0 items-center gap-[7px] pl-0.5 ${menu ? 'w-10' : 'w-[26px]'}`}>
            {ICONS[id]}
            {menu && <Caret color="#7f9a86" />}
          </button>
        ))}
      </div>
    </div>
  </main>
);

const IME = {
  moon: <path d="M13 1c1 6-3 12-12 12 6 7 17 5 17-4 0-4-2-7-5-8z" fill="#2572b4" />,
  punct: <g fill="#2572b4"><circle cx="6" cy="6" r="2.800" /><path d="M12 9c4-1 6 1 5 5-1 2-3 4-5 4 2-2 3-4 0-5z" /></g>,
  smile: <g stroke="#3379a9" strokeWidth="2"><circle cx="10" cy="10" r="9" /><path d="M6 11.500c1 4 7 4 8 0M7.500 6v3M12.500 6v3" /></g>,
  face: <path d="M1 7l3.500-4L8 7M12 7l3.500-4L19 7M5 16h10" stroke="#3379a9" strokeWidth="2.200" />,
  omega: <path d="M1 18h6c-4-4-5-7-3-11 3-6 9-6 12 0 2 4 1 7-3 11h6" stroke="#3379a9" strokeWidth="2.800" />,
  keyboard: (
    <g>
      <rect x="0" y="3" width="20" height="15" rx="2" fill="#3379a9" />
      <path d="M3 7h2M7 7h2M11 7h2M15 7h2M3 10.500h2M7 10.500h2M11 10.500h2M15 10.500h2M4 14.500h12" stroke="#fff" strokeWidth="1.700" />
    </g>
  ),
  person: (
    <g>
      <circle cx="8" cy="5" r="3.500" fill="#a7afba" />
      <path d="M0 17c0-6 3-8 8-8 4 0 6 1 7 3v5z" fill="#a7afba" />
      <path d="M10 12h3v7M14 12h5l-2 7" stroke="#fff" strokeWidth="3.500" />
      <path d="M10 12.500h2V19M14 12.500h4L16 19" stroke="#a7afba" strokeWidth="1.400" />
    </g>
  ),
  shirt: <path d="M6 1c2 3 6 3 8 0l6 4-2 6h-2v8H4v-8H2L0 5z" fill="#2572b4" />,
  translate: (
    <g>
      <rect x="0" y="0" width="12" height="13" rx="2" fill="#3379a9" />
      <path d="M9 3.500H4.500v6H9M4.500 6.500H9" stroke="#fff" strokeWidth="1.300" />
      <rect x="8" y="8" width="12" height="12" rx="2" fill="#3379a9" stroke="#fff" />
      <path d="M11 12h6v3.500h-6zM14 10v8.500" stroke="#fff" strokeWidth="1.300" />
    </g>
  ),
  crop: <path d="M5 0v16h15M0 4.500h15.500V20" stroke="#3379a9" strokeWidth="2.400" />,
  grid: <g><path d="M0 0h9v9H0zM0 11h9v9H0zM11 11h9v9h-9z" fill="#2572b4" /><path d="M12 1h7v7h-7z" stroke="#2572b4" strokeWidth="1.800" /></g>,
};

const ImeBar = () => (
  <div className="absolute right-[547px] bottom-[15px] z-20 flex h-[23px] items-center border border-[#8d8f9c] bg-white pr-px pl-6">
    <svg width="28" height="28" viewBox="0 0 28 28" className="absolute -top-1 -left-1.5" aria-hidden="true">
      <path d="M1 5l22-4 4 21-20 4z" fill="#e4572c" stroke="#c94a24" strokeLinejoin="round" />
      <path d="M21 7c-6-2-12-1-12 3 0 5 10 2 10 7 0 4-7 4-12 2" fill="none" stroke="#fff" strokeWidth="3.600" />
    </svg>
    <button type="button" className="w-[22px] text-[14px] leading-none font-bold text-[#3379a9]">英</button>
    {Object.entries(IME).map(([id, shape]) => (
      <button key={id} type="button" aria-label={id} className="flex w-[22px] justify-center">
        <svg width="15" height="15" viewBox="0 0 20 20" fill="none" aria-hidden="true">{shape}</svg>
      </button>
    ))}
  </div>
);

const BottomBars = () => (
  <footer className="shrink-0 text-[12px] whitespace-nowrap text-[#111]">
    <div className="flex h-4 items-stretch border-y border-[#75787d] text-[13px] leading-[10px]">
      <div className="w-1 border-r border-[#85868b] bg-[#a9a9ae]" />
      <button type="button" className="w-[47px] pb-1 pl-0.5">模型</button>
      <button type="button" className="w-[60px] border-x border-[#85868b] bg-[#a9a9ae] pb-1"><span className="text-[12px]">3D</span> 视图</button>
      <button type="button" className="w-[84px] border-r border-[#85868b] bg-[#a9a9ae] pr-2 pb-1">运动算例 1</button>
    </div>
    <div className="flex h-4 justify-end overflow-hidden leading-[22px]">
      <span className="w-[92px]">-136.48mm</span>
      <span className="w-[66px]">-20.05mm</span>
      <span className="mr-1.5 w-[42px] overflow-hidden">0.00mm</span>
      <span className="w-[54px]">欠定义</span>
      <span className="w-[93px]">在编辑 草图1</span>
      <span className="w-[23px] pt-0.5">{React.cloneElement(ICONS.traffic, { size: 14 })}</span>
      <span className="w-[85px] pt-0.5">
        <svg width="16" height="16" viewBox="0 0 16 16" aria-hidden="true">
          <path d="M6 1l6 9H0z" fill="#f6b73c" stroke="#7b5513" />
          <path d="M6 4v3M6 8v1" stroke="#222" />
          <path d="M9 9c4 0 4-4 4-7m-2 2l2-3 2 3M2 12v4M5 12v4M8 12v4M11 11v5" fill="none" stroke="#1d2a35" strokeWidth="1.500" />
        </svg>
      </span>
      <span className="w-8">MMGS</span>
    </div>
  </footer>
);

export default function App() {
  return (
    <div className="relative flex h-screen flex-col overflow-hidden bg-[#d7dae0] font-['Noto_Sans','Noto_Sans_CJK_SC',sans-serif]">
      <TitleBar />
      <AnnotationBar />
      <Ribbon />
      <div className="flex min-h-0 flex-1 flex-col bg-gradient-to-b from-[#c8eecb] via-[#c6dad1] to-[#c2c6d4]">
        <CommandTabs />
        <div className="flex min-h-0 flex-1">
          <PropertyPanel />
          <Viewport />
        </div>
      </div>
      <BottomBars />
      <ImeBar />
    </div>
  );
}
